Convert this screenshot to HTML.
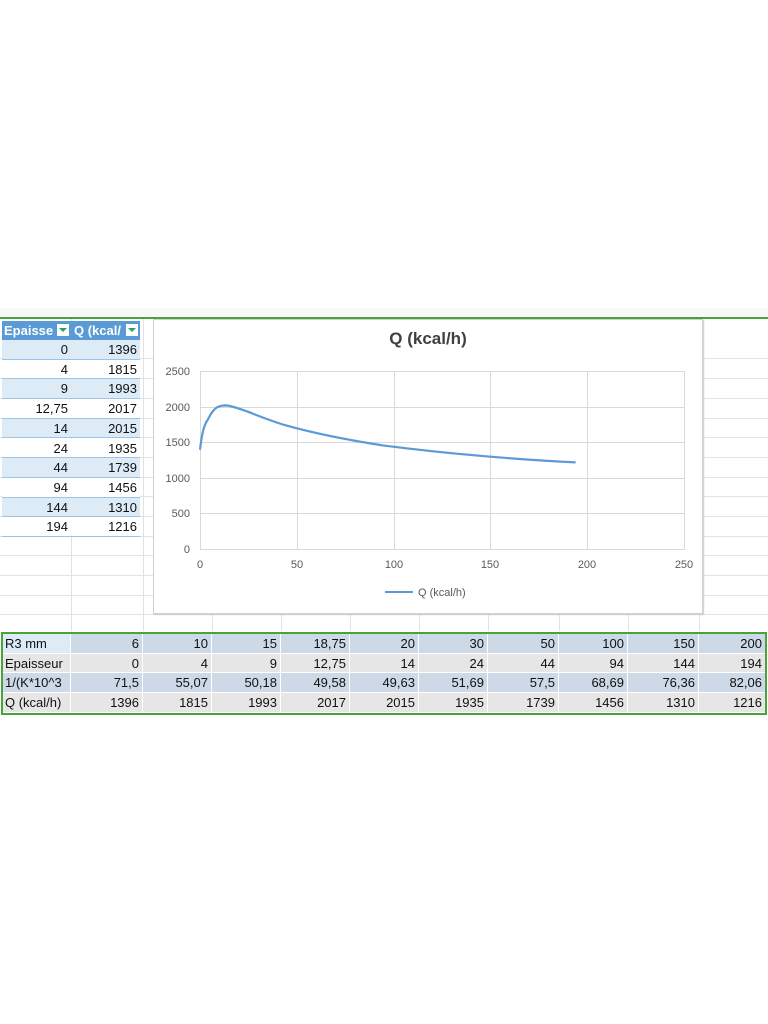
<!DOCTYPE html>
<html><head><meta charset="utf-8"><style>
body{margin:0;width:768px;height:1024px;background:#fff;position:relative;overflow:hidden;font-family:"Liberation Sans",sans-serif}
.a{position:absolute}
.c{position:absolute;font-size:13px;text-align:right;box-sizing:border-box;padding-right:3px;line-height:19px;color:#111}
</style></head><body>
<div class="a" style="left:0;top:308px;width:768px;height:10px;background:#f8f8f8"></div>
<div class="a" style="left:0;top:317px;width:768px;height:2px;background:#4aa23a"></div>
<svg class="a" style="left:0;top:319px" width="768" height="312">
<g stroke="#e2e2e2" stroke-width="1">
<line x1="0" y1="39.5" x2="768" y2="39.5"/><line x1="0" y1="59.5" x2="768" y2="59.5"/><line x1="0" y1="79.5" x2="768" y2="79.5"/><line x1="0" y1="99.5" x2="768" y2="99.5"/><line x1="0" y1="118.5" x2="768" y2="118.5"/><line x1="0" y1="138.5" x2="768" y2="138.5"/><line x1="0" y1="158.5" x2="768" y2="158.5"/><line x1="0" y1="177.5" x2="768" y2="177.5"/><line x1="0" y1="197.5" x2="768" y2="197.5"/><line x1="0" y1="217.5" x2="768" y2="217.5"/><line x1="0" y1="236.5" x2="768" y2="236.5"/><line x1="0" y1="256.5" x2="768" y2="256.5"/><line x1="0" y1="276.5" x2="768" y2="276.5"/><line x1="0" y1="295.5" x2="768" y2="295.5"/>
<line x1="71.5" y1="0" x2="71.5" y2="312"/><line x1="143.5" y1="0" x2="143.5" y2="312"/><line x1="212.5" y1="0" x2="212.5" y2="312"/><line x1="281.5" y1="0" x2="281.5" y2="312"/><line x1="350.5" y1="0" x2="350.5" y2="312"/><line x1="419.5" y1="0" x2="419.5" y2="312"/><line x1="488.5" y1="0" x2="488.5" y2="312"/><line x1="559.5" y1="0" x2="559.5" y2="312"/><line x1="628.5" y1="0" x2="628.5" y2="312"/><line x1="699.5" y1="0" x2="699.5" y2="312"/>
</g></svg>
<div class="a" style="left:2px;top:321px;width:138px;height:19px;background:#5b9bd5"></div>
<div class="a" style="left:4px;top:321px;color:#fff;font-weight:bold;font-size:13px;line-height:19px">Epaisse</div>
<div class="a" style="left:57px;top:324px;width:12px;height:12px;background:#fff"><div style="margin:4px 0 0 2px;border-left:4px solid transparent;border-right:4px solid transparent;border-top:4px solid #2aa26a;width:0"></div></div>
<div class="a" style="left:74px;top:321px;color:#fff;font-weight:bold;font-size:13px;line-height:19px">Q (kcal/</div>
<div class="a" style="left:126px;top:324px;width:12px;height:12px;background:#fff"><div style="margin:4px 0 0 2px;border-left:4px solid transparent;border-right:4px solid transparent;border-top:4px solid #2aa26a;width:0"></div></div>
<div id="lt"></div>
<script>
var a=["0","4","9","12,75","14","24","44","94","144","194"],b=["1396","1815","1993","2017","2015","1935","1739","1456","1310","1216"],h="";
for(var i=0;i<10;i++){var y=340+i*19.7;var bg=i%2==0?"#ddebf7":"#fff";
h+='<div class="a" style="left:2px;top:'+y+'px;width:138px;height:19.7px;background:'+bg+';border-bottom:1px solid #9dc3e6;box-sizing:border-box"></div>';
h+='<div class="c" style="left:2px;top:'+y+'px;width:69px">'+a[i]+'</div><div class="c" style="left:71px;top:'+y+'px;width:69px">'+b[i]+'</div>';}
document.getElementById('lt').outerHTML=h;
</script>
<div class="a" style="left:153px;top:319px;width:548px;height:293px;background:#fff;border:1px solid #d0d0d0;box-shadow:1px 1px 1px #ccc"></div>
<div class="a" style="left:153px;top:329px;width:550px;text-align:center;font-weight:bold;font-size:17px;color:#404040">Q (kcal/h)</div>
<svg class="a" style="left:153px;top:319px" width="550" height="293" font-family="Liberation Sans" font-size="11" fill="#595959">
<g stroke="#d9d9d9" stroke-width="1">
<line x1="47" y1="52.5" x2="532" y2="52.5"/><line x1="47" y1="88.5" x2="532" y2="88.5"/><line x1="47" y1="123.5" x2="532" y2="123.5"/><line x1="47" y1="159.5" x2="532" y2="159.5"/><line x1="47" y1="194.5" x2="532" y2="194.5"/><line x1="47" y1="230.5" x2="532" y2="230.5"/>
<line x1="47.5" y1="52" x2="47.5" y2="230"/><line x1="144.5" y1="52" x2="144.5" y2="230"/><line x1="241.5" y1="52" x2="241.5" y2="230"/><line x1="337.5" y1="52" x2="337.5" y2="230"/><line x1="434.5" y1="52" x2="434.5" y2="230"/><line x1="531.5" y1="52" x2="531.5" y2="230"/>
</g>
<g text-anchor="end"><text x="37" y="56">2500</text><text x="37" y="92">2000</text><text x="37" y="127">1500</text><text x="37" y="163">1000</text><text x="37" y="198">500</text><text x="37" y="234">0</text></g>
<g text-anchor="middle"><text x="47" y="249">0</text><text x="144" y="249">50</text><text x="241" y="249">100</text><text x="337" y="249">150</text><text x="434" y="249">200</text><text x="531" y="249">250</text></g>
<path d="M47,130.6 C49,114 51,106 54.7,100.8 C58,94 61,90 64.4,88.1 C67,87 69,86.5 71.7,86.4 L74.1,86.5 C80,87.5 86,89.5 93.5,92.2 C106,97 118,102 132.2,106.2 C160,114 195,121 229,126.3 C262,130.5 294,134 325.8,136.7 C358,139.5 390,141.8 422.6,143.4" fill="none" stroke="#5b9bd5" stroke-width="2.2" stroke-linejoin="round"/>
<line x1="232" y1="273" x2="260" y2="273" stroke="#5b9bd5" stroke-width="2"/>
<text x="265" y="277">Q (kcal/h)</text>
</svg>
<div id="bt"></div>
<script>
var rows=[["R3 mm","6","10","15","18,75","20","30","50","100","150","200"],["Epaisseur","0","4","9","12,75","14","24","44","94","144","194"],["1/(K*10^3","71,5","55,07","50,18","49,58","49,63","51,69","57,5","68,69","76,36","82,06"],["Q (kcal/h)","1396","1815","1993","2017","2015","1935","1739","1456","1310","1216"]];
var xs=[2,71,143,212,281,350,419,488,559,628,699,766],bgs=["#cdd9e6","#e6e6e6","#cdd9e6","#e6e6e6"],h2="";
for(var r=0;r<4;r++){var y=634+r*19.7;
h2+='<div class="a" style="left:2px;top:'+y+'px;width:764px;height:19.7px;background:'+bgs[r]+';border-bottom:1px solid #fff;box-sizing:border-box"></div>';
for(var c=0;c<11;c++){var st=c==0?'text-align:left;padding-left:3px;':'';var bg=(r==0&&c==0)?'background:#ddebf7;':'';
h2+='<div class="c" style="'+st+bg+'left:'+xs[c]+'px;top:'+y+'px;width:'+(xs[c+1]-xs[c])+'px;height:19px;border-right:1px solid #fff">'+rows[r][c]+'</div>';}}
h2+='<div class="a" style="left:1px;top:632px;width:762px;height:79px;border:2px solid #4aa23a"></div>';
document.getElementById('bt').outerHTML=h2;
</script>
</body></html>
